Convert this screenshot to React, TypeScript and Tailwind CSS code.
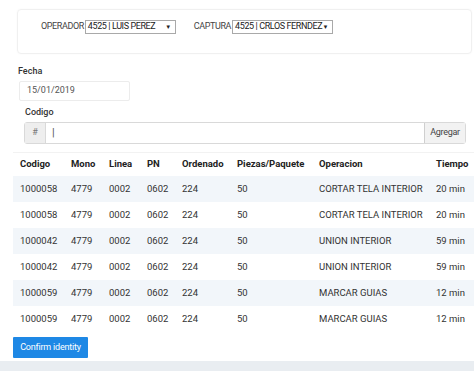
import React from 'react';

const rows = [
  { codigo: '1000058', mono: '4779', linea: '0002', pn: '0602', ordenado: '224', piezas: '50', op: 'CORTAR TELA INTERIOR', tiempo: '20 min' },
  { codigo: '1000058', mono: '4779', linea: '0002', pn: '0602', ordenado: '224', piezas: '50', op: 'CORTAR TELA INTERIOR', tiempo: '20 min' },
  { codigo: '1000042', mono: '4779', linea: '0002', pn: '0602', ordenado: '224', piezas: '50', op: 'UNION INTERIOR', tiempo: '59 min' },
  { codigo: '1000042', mono: '4779', linea: '0002', pn: '0602', ordenado: '224', piezas: '50', op: 'UNION INTERIOR', tiempo: '59 min' },
  { codigo: '1000059', mono: '4779', linea: '0002', pn: '0602', ordenado: '224', piezas: '50', op: 'MARCAR GUIAS', tiempo: '12 min' },
  { codigo: '1000059', mono: '4779', linea: '0002', pn: '0602', ordenado: '224', piezas: '50', op: 'MARCAR GUIAS', tiempo: '12 min' },
];

const headers = ['Codigo', 'Mono', 'Linea', 'PN', 'Ordenado', 'Piezas/Paquete', 'Operacion', 'Tiempo'];

// fixed column widths so the columns line up like the original table
const cols = 'grid grid-cols-[51px_38px_38px_35px_55px_82px_117px_43px]';

const FakeSelect = ({ value, width }: { value: string; width: string }) => (
  <div className={`${width} h-[14px] border border-[#a9a9a9] bg-white flex items-center justify-between pl-[2px] pr-[4px] text-[9px] tracking-[-0.4px] whitespace-nowrap text-[#222]`}>
    <span>{value}</span>
    <span className="text-[6px] leading-none">▼</span>
  </div>
);

export default function App() {
  return (
    <div className="w-[474px] h-[371px] bg-white overflow-hidden font-['Roboto',sans-serif] text-[#333]">
      {/* top filters card */}
      <div className="ml-[17px] mt-[9px] w-[455px] h-[45px] border border-[#f0f0f0] rounded-[4px] shadow-[0_0_2px_rgba(0,0,0,0.04)] flex items-center pl-[23px] pb-[9px] text-[9px] tracking-[-0.4px] text-[#444]">
        <span className="mr-[1px]">OPERADOR</span>
        <FakeSelect value="4525 | LUIS PEREZ" width="w-[91px]" />
        <span className="ml-[18px] mr-[1px]">CAPTURA</span>
        <FakeSelect value="4525 | CRLOS FERNDEZ" width="w-[101px]" />
      </div>

      {/* fecha */}
      <div className="ml-[18px] mt-[11px] h-[12px] leading-[12px] text-[9px] font-medium text-[#333]">Fecha</div>
      <div className="ml-[19px] mt-[4px] w-[111px] h-[20px] border border-[#ececec] rounded-[2px] flex items-center pl-[7px] text-[9px] text-[#555]">
        15/01/2019
      </div>

      {/* codigo */}
      <div className="ml-[25px] mt-[5px] h-[12px] leading-[12px] text-[9px] font-medium text-[#333]">Codigo</div>
      <div className="ml-[24px] mt-[4px] w-[442px] h-[22px] flex border border-[#d9d9d9] rounded-[3px]">
        <div className="w-[21px] bg-[#eeeeee] border-r border-[#d9d9d9] flex items-center justify-center text-[9px] text-[#777]">#</div>
        <div className="flex-1 flex items-center pl-[6px] text-[11px] text-[#555]">|</div>
        <div className="w-[41px] bg-[#f2f2f2] border-l border-[#cfcfcf] flex items-center justify-center text-[9px] tracking-[-0.3px] text-[#444]">Agregar</div>
      </div>

      {/* table */}
      <div className="ml-[13px] mt-[8px] w-[461px] border-t border-[#f2f2f2] text-[9.5px]">
        <div className={`${cols} h-[23px] items-center font-bold text-[#222]`}>
          {headers.map((h) => (
            <div key={h} className="pl-[7px] whitespace-nowrap">{h}</div>
          ))}
        </div>
        {rows.map((r, i) => (
          <div key={i} className={`${cols} h-[26px] items-center ${i % 2 === 0 ? 'bg-[#f2f6fa]' : 'bg-white'}`}>
            <div className="pl-[7px]">{r.codigo}</div>
            <div className="pl-[7px]">{r.mono}</div>
            <div className="pl-[7px]">{r.linea}</div>
            <div className="pl-[7px]">{r.pn}</div>
            <div className="pl-[7px]">{r.ordenado}</div>
            <div className="pl-[7px]">{r.piezas}</div>
            <div className="pl-[7px] whitespace-nowrap">{r.op}</div>
            <div className="pl-[7px] whitespace-nowrap">{r.tiempo}</div>
          </div>
        ))}
      </div>

      <button className="ml-[13px] mt-[5px] w-[75px] h-[21px] bg-[#1e88e5] text-white text-[9px] tracking-[-0.2px] rounded-[1px] flex items-center justify-center">
        Confirm identity
      </button>

      <div className="mt-[3px] h-[12px] bg-[#e9edf1]" />
    </div>
  );
}
